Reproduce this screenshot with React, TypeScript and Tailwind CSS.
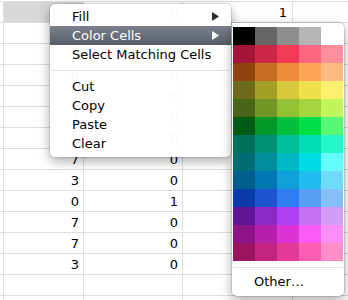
import React from "react";

const SWATCHES: string[][] = [
  ["#000000", "#666666", "#8e8e8e", "#b5b5b5", "#ffffff"],
  ["#a3163a", "#cc2646", "#f03a58", "#fe677d", "#fe8e9b"],
  ["#8f4410", "#c46e22", "#ee8d39", "#fca554", "#fdbb80"],
  ["#6d6a1a", "#a59f27", "#d6ca3c", "#eee14b", "#faf06e"],
  ["#4a6517", "#709626", "#94c133", "#a3d63e", "#c0f55c"],
  ["#005c14", "#00992a", "#00c03c", "#00e046", "#58f774"],
  ["#00705b", "#009078", "#00c09c", "#00dcb4", "#1ef8cb"],
  ["#006d74", "#008e9a", "#00b8c4", "#00dce5", "#66fcfd"],
  ["#005e8f", "#0078b3", "#0fa0d8", "#22bef0", "#70dafb"],
  ["#0a3bab", "#1e53cf", "#2e7cef", "#58a0f5", "#84bff9"],
  ["#621499", "#8b2ac5", "#ac3ff0", "#c373f2", "#d39cf6"],
  ["#8d1487", "#b520ad", "#dc34d4", "#fa5cf5", "#fc8ef6"],
  ["#9a1460", "#c32381", "#e43a98", "#fe5db4", "#fe8dc8"],
];

const ROWS: { b?: string; c?: string; d?: string; hl?: boolean }[] = [
  { c: "0", d: "1", hl: true },
  { b: "7", c: "0" },
  { b: "3", c: "0" },
  { b: "0", c: "0" },
  { b: "7", c: "0" },
  { b: "3", c: "0" },
  { b: "7", c: "0" },
  { b: "7", c: "0" },
  { b: "3", c: "0" },
  { b: "0", c: "1" },
  { b: "7", c: "0" },
  { b: "7", c: "0" },
  { b: "3", c: "0" },
  {},
  {},
];

function Arrow({ white }: { white?: boolean }) {
  return (
    <svg width="7" height="9" viewBox="0 0 7 9" className="shrink-0">
      <path d="M0 0 L7 4.5 L0 9 Z" fill={white ? "#ffffff" : "#2b2b2b"} />
    </svg>
  );
}

function MenuItem({ label, sub, active }: { label: string; sub?: boolean; active?: boolean }) {
  return (
    <div
      className={
        active
          ? "flex h-[19px] items-center justify-between bg-gradient-to-b from-[#7b818c] to-[#585e69] pl-[22px] pr-[12px] text-white"
          : "flex h-[19px] items-center justify-between pl-[22px] pr-[12px] text-black"
      }
    >
      <span>{label}</span>
      {sub && <Arrow white={active} />}
    </div>
  );
}

export default function App() {
  return (
    <div className="relative h-[300px] w-[348px] overflow-hidden bg-white font-['DejaVu_Sans',sans-serif] text-[13px] leading-none text-black">
      <div className="pt-[1px]">
        <div className="border-t border-[#dedede]">
          {ROWS.map((r, i) => (
            <div key={i} className="flex h-[21px] border-b border-[#dedede]">
              <div className="w-[4px] border-r border-[#dedede]" />
              <div
                className={
                  "flex w-[80px] items-center justify-end border-r border-[#dedede] pr-[4px] " +
                  (r.hl ? "bg-[#d8d8d8]" : "")
                }
              >
                {r.b}
              </div>
              <div className="flex w-[99px] items-center justify-end border-r border-[#dedede] pr-[4px]">
                {r.c}
              </div>
              <div className="flex w-[110px] items-center justify-end border-r border-[#dedede] pr-[5px]">
                {r.d}
              </div>
              <div className="flex-1" />
            </div>
          ))}
        </div>
      </div>

      {/* context menu */}
      <div className="absolute left-[50px] top-[4px] w-[181px] rounded-[5px] bg-white/[0.97] pb-[4px] pt-[3px] shadow-[0_4px_12px_rgba(0,0,0,0.35)] ring-1 ring-black/10">
        <MenuItem label="Fill" sub />
        <MenuItem label="Color Cells" sub active />
        <MenuItem label="Select Matching Cells" />
        <div className="flex h-[13px] items-center px-[1px]">
          <div className="h-px w-full bg-[#e2e2e2]" />
        </div>
        <MenuItem label="Cut" />
        <MenuItem label="Copy" />
        <MenuItem label="Paste" />
        <MenuItem label="Clear" />
      </div>

      {/* color submenu */}
      <div className="absolute left-[232px] top-[23px] w-[112px] rounded-[5px] rounded-tl-none bg-white px-[1px] pb-[6px] pt-[4px] shadow-[0_4px_12px_rgba(0,0,0,0.35)] ring-1 ring-black/10">
        <div className="grid grid-cols-[repeat(5,22px)]">
          {SWATCHES.flat().map((c, i) => (
            <div key={i} className="h-[18px]" style={{ backgroundColor: c }} />
          ))}
        </div>
        <div className="flex h-[11px] items-start pt-[6px]">
          <div className="h-px w-full bg-[#e2e2e2]" />
        </div>
        <div className="flex h-[18px] items-center pl-[21px]">Other…</div>
      </div>
    </div>
  );
}
